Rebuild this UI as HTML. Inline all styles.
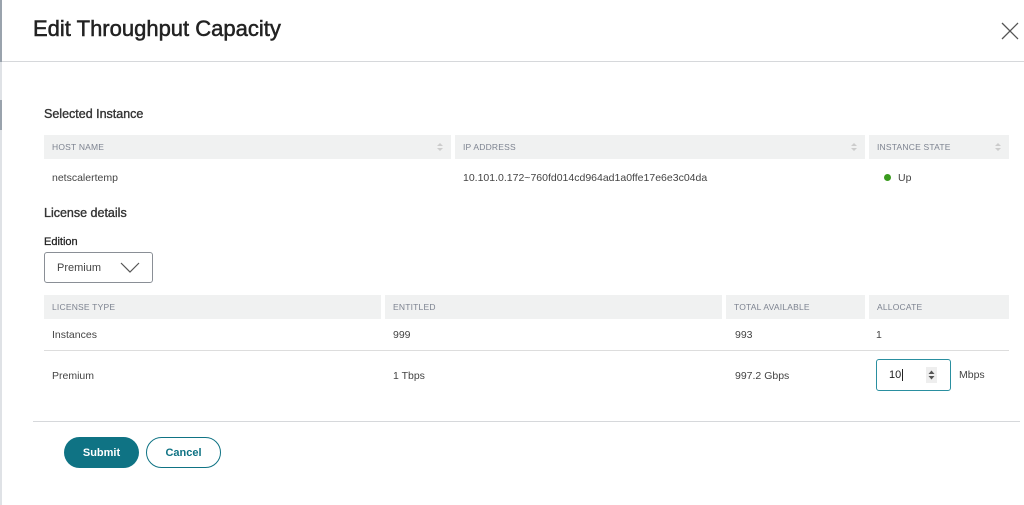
<!DOCTYPE html>
<html><head><style>
*{margin:0;padding:0;box-sizing:border-box}
body{width:1024px;height:505px;background:#fff;font-family:"Liberation Sans",sans-serif;position:relative;overflow:hidden;color:#333}
.a{position:absolute;white-space:nowrap}
.hd{position:absolute;background:#f0f1f1;height:24px;font-size:8.5px;color:#7d8390;letter-spacing:.2px;padding-left:8px;line-height:24px}
.t{font-size:10.5px;color:#444}
.s{position:absolute;right:8px;top:7px;width:6px;height:10px}
</style></head><body>
<div class="a" style="left:0;top:0;width:2px;height:505px;background:#dfe2e6"></div>
<div class="a" style="left:0;top:0;width:2px;height:62px;background:#9aa3ad"></div>
<div class="a" style="left:0;top:100px;width:2px;height:30px;background:#9aa3ad"></div>
<div class="a" style="left:33px;top:16px;font-size:22px;color:#222;-webkit-text-stroke:0.5px #222">Edit Throughput Capacity</div>
<svg class="a" style="left:1001px;top:22px" width="18" height="18"><path d="M1 1L17 17M17 1L1 17" stroke="#555" stroke-width="1.3"/></svg>
<div class="a" style="left:2px;top:61px;width:1022px;height:1px;background:#d6d8db"></div>
<div class="a" style="left:44px;top:107px;font-size:12.5px;color:#333;-webkit-text-stroke:0.35px #333">Selected Instance</div>
<div class="hd" style="left:44px;top:135px;width:407px">HOST NAME<svg class="s" viewBox="0 0 6 10"><path d="M0 4L3 1L6 4ZM0 6L3 9L6 6Z" fill="#ccc"/></svg></div>
<div class="hd" style="left:455px;top:135px;width:410px">IP ADDRESS<svg class="s" viewBox="0 0 6 10"><path d="M0 4L3 1L6 4ZM0 6L3 9L6 6Z" fill="#ccc"/></svg></div>
<div class="hd" style="left:869px;top:135px;width:140px">INSTANCE STATE<svg class="s" viewBox="0 0 6 10"><path d="M0 4L3 1L6 4ZM0 6L3 9L6 6Z" fill="#ccc"/></svg></div>
<div class="a t" style="left:52px;top:172px">netscalertemp</div>
<div class="a t" style="left:463px;top:172px">10.101.0.172~760fd014cd964ad1a0ffe17e6e3c04da</div>
<div class="a" style="left:884px;top:174px;width:7px;height:7px;border-radius:50%;background:#3a9b1e"></div>
<div class="a t" style="left:898px;top:172px">Up</div>
<div class="a" style="left:44px;top:206px;font-size:12.5px;color:#333;-webkit-text-stroke:0.35px #333">License details</div>
<div class="a" style="left:44px;top:236px;font-size:11px;color:#222;-webkit-text-stroke:0.25px #222">Edition</div>
<div class="a" style="left:44px;top:252px;width:109px;height:31px;border:1px solid #8a8f96;border-radius:3px"></div>
<div class="a t" style="left:57px;top:262px;font-size:11px">Premium</div>
<svg class="a" style="left:120px;top:262px" width="20" height="12"><path d="M1 1L10 10L19 1" stroke="#555" fill="none" stroke-width="1.2"/></svg>
<div class="hd" style="left:44px;top:295px;width:337px">LICENSE TYPE</div>
<div class="hd" style="left:385px;top:295px;width:337px">ENTITLED</div>
<div class="hd" style="left:726px;top:295px;width:139px">TOTAL AVAILABLE</div>
<div class="hd" style="left:869px;top:295px;width:140px">ALLOCATE</div>
<div class="a t" style="left:52px;top:329px">Instances</div>
<div class="a t" style="left:393px;top:329px">999</div>
<div class="a t" style="left:735px;top:329px">993</div>
<div class="a t" style="left:876px;top:329px">1</div>
<div class="a" style="left:44px;top:350px;width:965px;height:1px;background:#ddd"></div>
<div class="a t" style="left:52px;top:370px">Premium</div>
<div class="a t" style="left:393px;top:370px">1 Tbps</div>
<div class="a t" style="left:735px;top:370px">997.2 Gbps</div>
<div class="a" style="left:876px;top:359px;width:75px;height:32px;border:1px solid #2a8fa0;border-radius:3px"></div>
<div class="a t" style="left:889px;top:369px;font-size:11px;color:#222">10<span style="border-left:1px solid #222;margin-left:1px"></span></div>
<div class="a" style="left:926px;top:367px;width:11px;height:16px;background:#eee"></div>
<svg class="a" style="left:928px;top:369px" width="7" height="12"><path d="M0.5 5L3.5 1.5L6.5 5ZM0.5 7L3.5 10.5L6.5 7Z" fill="#555"/></svg>
<div class="a t" style="left:959px;top:369px">Mbps</div>
<div class="a" style="left:33px;top:421px;width:987px;height:1px;background:#d6d8db"></div>
<div class="a" style="left:64px;top:437px;width:75px;height:31px;border-radius:16px;background:#0f7384;color:#fff;font-weight:bold;font-size:11px;text-align:center;line-height:32px">Submit</div>
<div class="a" style="left:146px;top:437px;width:75px;height:31px;border-radius:16px;border:1.5px solid #0f7384;color:#0f7384;font-weight:bold;font-size:11px;text-align:center;line-height:30px">Cancel</div>
</body></html>
